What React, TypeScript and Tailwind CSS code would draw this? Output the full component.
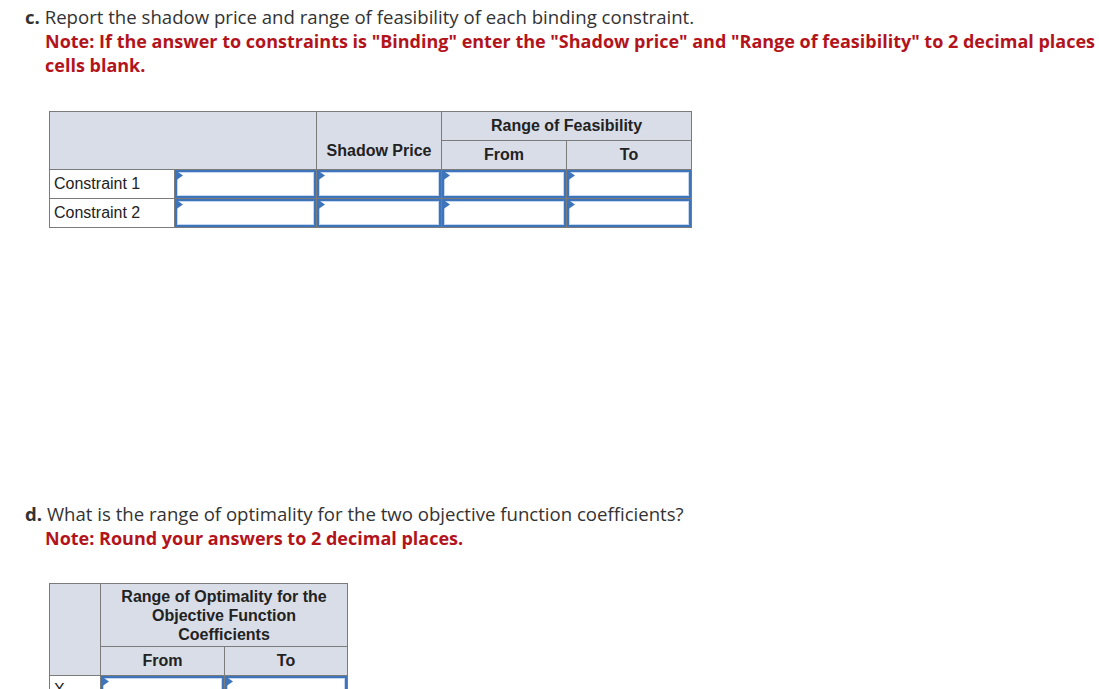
import React from 'react'

const cellBorder = 'border border-[#7b7b7b]'
const headCell = `${cellBorder} bg-[#d9dde7] text-center font-bold text-[16px] text-[#222]`

function InputCell() {
  return (
    <td className={`${cellBorder} p-0 h-[29px]`}>
      <div className="relative h-[28px] border-2 border-[#3d74ba] bg-white shadow-[inset_0_0_0_1px_#c5d7f0]">
        <svg className="absolute left-[-2px] top-[-2px]" width="8" height="11" viewBox="0 0 8 11">
          <polygon points="0,0 8,5.5 0,11" fill="#3d74ba" />
        </svg>
      </div>
    </td>
  )
}

export default function App() {
  return (
    <main
      className="h-[689px] overflow-hidden bg-white text-[#333] pl-[25px] pt-[5px]"
      style={{ fontFamily: '"Open Sans", "Lato", sans-serif' }}
    >
      <p className="text-[18.6px] leading-[24px] whitespace-nowrap">
        <span className="font-bold">c.</span> Report the shadow price and range of feasibility of each binding constraint.
      </p>
      <p className="pl-[20px] text-[18px] leading-[24px] font-bold text-[#b3141c] whitespace-nowrap">
        Note: If the answer to constraints is "Binding" enter the "Shadow price" and "Range of feasibility" to 2 decimal places
        <br />
        cells blank.
      </p>

      <table
        className="mt-[34px] ml-[24px] border-collapse"
        style={{ fontFamily: '"Liberation Sans", Arial, sans-serif' }}
      >
        <colgroup>
          <col className="w-[125px]" />
          <col className="w-[142px]" />
          <col className="w-[125px]" />
          <col className="w-[125px]" />
          <col className="w-[125px]" />
        </colgroup>
        <thead>
          <tr className="h-[29px]">
            <th className={headCell} colSpan={2} rowSpan={2}></th>
            <th className={`${headCell} pt-[20px]`} rowSpan={2}>Shadow Price</th>
            <th className={headCell} colSpan={2}>Range of Feasibility</th>
          </tr>
          <tr className="h-[29px]">
            <th className={headCell}>From</th>
            <th className={headCell}>To</th>
          </tr>
        </thead>
        <tbody>
          {['Constraint 1', 'Constraint 2'].map((label) => (
            <tr key={label} className="h-[29px]">
              <td className={`${cellBorder} px-[4px] text-[16px] text-[#222]`}>{label}</td>
              <InputCell />
              <InputCell />
              <InputCell />
              <InputCell />
            </tr>
          ))}
        </tbody>
      </table>

      <p className="mt-[274px] text-[18.6px] leading-[24px] whitespace-nowrap">
        <span className="font-bold">d.</span> What is the range of optimality for the two objective function coefficients?
      </p>
      <p className="pl-[20px] text-[18px] leading-[24px] font-bold text-[#b3141c] whitespace-nowrap">
        Note: Round your answers to 2 decimal places.
      </p>

      <table
        className="mt-[33px] ml-[24px] border-collapse"
        style={{ fontFamily: '"Liberation Sans", Arial, sans-serif' }}
      >
        <colgroup>
          <col className="w-[51px]" />
          <col className="w-[124px]" />
          <col className="w-[123px]" />
        </colgroup>
        <thead>
          <tr className="h-[63px]">
            <th className={headCell} rowSpan={2}></th>
            <th className={`${headCell} leading-[19px] px-[4px]`} colSpan={2}>
              Range of Optimality for the
              <br />
              Objective Function
              <br />
              Coefficients
            </th>
          </tr>
          <tr className="h-[29px]">
            <th className={headCell}>From</th>
            <th className={headCell}>To</th>
          </tr>
        </thead>
        <tbody>
          {['X', 'Y'].map((label) => (
            <tr key={label} className="h-[29px]">
              <td className={`${cellBorder} px-[4px] text-[16px] text-[#222]`}>
                {label}
                <sub>1</sub>
              </td>
              <InputCell />
              <InputCell />
            </tr>
          ))}
        </tbody>
      </table>
    </main>
  )
}
